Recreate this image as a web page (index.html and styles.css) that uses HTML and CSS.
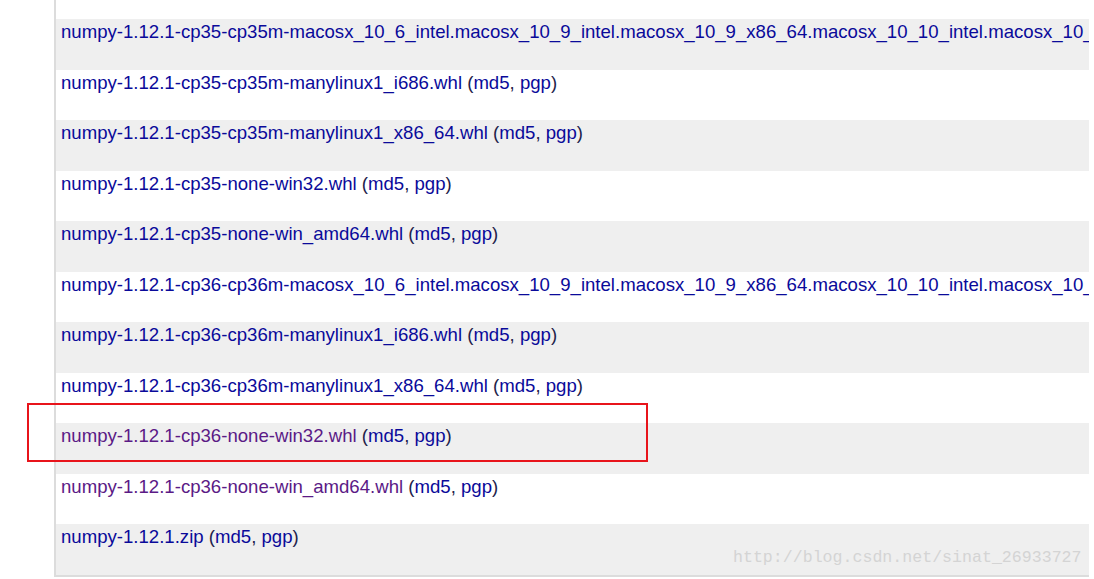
FILE: index.html
```html
<!DOCTYPE html>
<html>
<head>
<meta charset="utf-8">
<link rel="stylesheet" href="styles.css">
</head>
<body>
<div class="page">
  <div class="table">
    <div class="row odd clip"><a class="lnk" href="#">numpy-1.12.1-cp35-cp35m-macosx_10_6_intel.macosx_10_9_intel.macosx_10_9_x86_64.macosx_10_10_intel.macosx_10_10_x86_64.whl</a> (<a class="lnk" href="#">md5</a>, <a class="lnk" href="#">pgp</a>)</div>
    <div class="row"><a class="lnk" href="#">numpy-1.12.1-cp35-cp35m-manylinux1_i686.whl</a> (<a class="lnk" href="#">md5</a>, <a class="lnk" href="#">pgp</a>)</div>
    <div class="row odd"><a class="lnk" href="#">numpy-1.12.1-cp35-cp35m-manylinux1_x86_64.whl</a> (<a class="lnk" href="#">md5</a>, <a class="lnk" href="#">pgp</a>)</div>
    <div class="row"><a class="lnk" href="#">numpy-1.12.1-cp35-none-win32.whl</a> (<a class="lnk" href="#">md5</a>, <a class="lnk" href="#">pgp</a>)</div>
    <div class="row odd"><a class="lnk" href="#">numpy-1.12.1-cp35-none-win_amd64.whl</a> (<a class="lnk" href="#">md5</a>, <a class="lnk" href="#">pgp</a>)</div>
    <div class="row clip"><a class="lnk" href="#">numpy-1.12.1-cp36-cp36m-macosx_10_6_intel.macosx_10_9_intel.macosx_10_9_x86_64.macosx_10_10_intel.macosx_10_10_x86_64.whl</a> (<a class="lnk" href="#">md5</a>, <a class="lnk" href="#">pgp</a>)</div>
    <div class="row odd"><a class="lnk" href="#">numpy-1.12.1-cp36-cp36m-manylinux1_i686.whl</a> (<a class="lnk" href="#">md5</a>, <a class="lnk" href="#">pgp</a>)</div>
    <div class="row"><a class="lnk" href="#">numpy-1.12.1-cp36-cp36m-manylinux1_x86_64.whl</a> (<a class="lnk" href="#">md5</a>, <a class="lnk" href="#">pgp</a>)</div>
    <div class="row odd"><a class="lnk visited" href="#">numpy-1.12.1-cp36-none-win32.whl</a> (<a class="lnk" href="#">md5</a>, <a class="lnk" href="#">pgp</a>)<div class="mark"></div></div>
    <div class="row"><a class="lnk visited" href="#">numpy-1.12.1-cp36-none-win_amd64.whl</a> (<a class="lnk" href="#">md5</a>, <a class="lnk" href="#">pgp</a>)</div>
    <div class="row odd last"><a class="lnk" href="#">numpy-1.12.1.zip</a> (<a class="lnk" href="#">md5</a>, <a class="lnk" href="#">pgp</a>)<span class="watermark">http://blog.csdn.net/sinat_26933727</span></div>
  </div>
</div>
</body>
</html>
```
FILE: styles.css
```css
html, body {
  margin: 0;
  padding: 0;
  background: #fff;
}
.page {
  width: 1094px;
  height: 579px;
  overflow: hidden;
  font-family: "Liberation Sans", Arial, sans-serif;
}
.table {
  margin-left: 54px;
  width: 1033px;
  border-left: 2px solid #dcdcdc;
  padding-top: 19px;
}
.row {
  position: relative;
  height: 50.5px;
  box-sizing: border-box;
  padding-left: 5px;
  font-size: 18.6px;
  line-height: 26px;
  color: #22224a;
  white-space: nowrap;
}
.row.clip {
  overflow: hidden;
}
.row.odd {
  background: #efefef;
}
.row.last {
  border-bottom: 2px solid #dcdcdc;
  height: 52.5px;
}
.lnk {
  color: #0a0a9a;
  text-decoration: none;
}
.lnk.visited {
  color: #5b1a86;
}
.mark {
  position: absolute;
  left: -29px;
  top: -20px;
  width: 617px;
  height: 55px;
  border: 2px solid #e8141b;
}
.watermark {
  position: absolute;
  left: 677px;
  top: 24px;
  font-family: "Liberation Mono", "DejaVu Sans Mono", monospace;
  font-size: 16.6px;
  line-height: 20px;
  color: #d4d4d4;
}
```
